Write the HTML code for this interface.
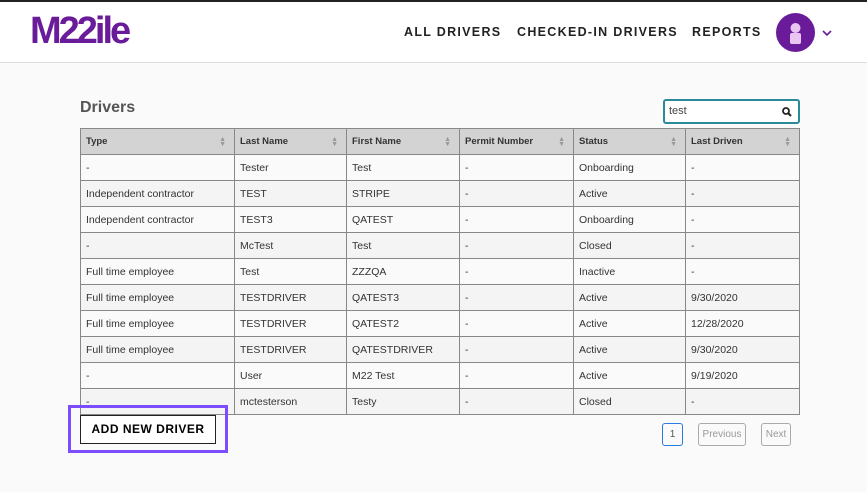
<!DOCTYPE html>
<html><head><style>
*{margin:0;padding:0;box-sizing:border-box}
body{width:867px;height:492px;background:#fafafa;font-family:"Liberation Sans",sans-serif;position:relative;overflow:hidden}
.top{position:absolute;left:0;top:0;width:867px;height:2px;background:#222}
.hdr{position:absolute;left:0;top:2px;width:867px;height:61px;background:#fff;border-bottom:1px solid #ddd}
.logo{position:absolute;left:30px;top:8px;font-size:38px;font-weight:bold;color:#6a1b9a;letter-spacing:-3px}
.nav{position:absolute;top:23px;font-size:12.5px;font-weight:bold;letter-spacing:1.3px;color:#222}
.av{position:absolute;left:776px;top:11px;width:39px;height:39px;border-radius:50%;background:#6a1b9a}
h1{position:absolute;left:80px;top:99px;font-size:16px;color:#555;font-weight:bold}
.search{position:absolute;left:663px;top:99px;width:137px;height:25px;border:2px solid #2a8a9a;border-radius:3px;background:#fff;font-size:11px;padding:4px 4px;color:#444}
table{position:absolute;left:80px;top:128px;border-collapse:collapse;font-size:10.5px;color:#333}
td,th{border:1px solid #888;height:26px;padding:0 5px;text-align:left}
th{background:#d3d3d3;font-weight:bold;font-size:9.5px;position:relative}
th span{position:absolute;right:8px;top:8px;color:#999;font-size:7px;line-height:5px}
tr:nth-child(odd) td{background:#f4f4f4}
.btn{position:absolute;left:80px;top:415px;width:136px;height:29px;border:1px solid #222;background:#fff;font-size:12px;font-weight:bold;text-align:center;line-height:27px;letter-spacing:.5px}
.ring{position:absolute;left:68px;top:405px;width:160px;height:48px;border:3px solid #7b4dff}
.pg{position:absolute;top:423px;height:23px;border:1px solid #aaa;border-radius:3px;font-size:10px;color:#999;text-align:center;line-height:21px}
</style></head><body>
<div class="top"></div>
<div class="hdr">
<div class="logo">M22ile</div>
<div class="nav" style="left:404px">ALL DRIVERS</div>
<div class="nav" style="left:517px">CHECKED-IN DRIVERS</div>
<div class="nav" style="left:692px">REPORTS</div>
<div class="av"><svg width="39" height="39"><circle cx="19.5" cy="15" r="5" fill="#e9c6f2"/><rect x="14" y="20" width="11" height="11" rx="2" fill="#e9c6f2"/></svg></div>
<svg style="position:absolute;left:821px;top:27px" width="12" height="8"><path d="M2 2l4 4 4-4" stroke="#6a1b9a" stroke-width="1.6" fill="none"/></svg>
</div>
<h1>Drivers</h1>
<div class="search">test<svg style="position:absolute;right:6px;top:6px" width="10" height="10"><circle cx="4" cy="4" r="3" stroke="#222" stroke-width="1.8" fill="none"/><path d="M6 6l3 3" stroke="#222" stroke-width="2"/></svg></div>
<table>
<tr><th style="width:154px">Type<span>▲<br>▼</span></th><th style="width:112px">Last Name<span>▲<br>▼</span></th><th style="width:113px">First Name<span>▲<br>▼</span></th><th style="width:114px">Permit Number<span>▲<br>▼</span></th><th style="width:112px">Status<span>▲<br>▼</span></th><th style="width:114px">Last Driven<span>▲<br>▼</span></th></tr>
<tr><td>-</td><td>Tester</td><td>Test</td><td>-</td><td>Onboarding</td><td>-</td></tr>
<tr><td>Independent contractor</td><td>TEST</td><td>STRIPE</td><td>-</td><td>Active</td><td>-</td></tr>
<tr><td>Independent contractor</td><td>TEST3</td><td>QATEST</td><td>-</td><td>Onboarding</td><td>-</td></tr>
<tr><td>-</td><td>McTest</td><td>Test</td><td>-</td><td>Closed</td><td>-</td></tr>
<tr><td>Full time employee</td><td>Test</td><td>ZZZQA</td><td>-</td><td>Inactive</td><td>-</td></tr>
<tr><td>Full time employee</td><td>TESTDRIVER</td><td>QATEST3</td><td>-</td><td>Active</td><td>9/30/2020</td></tr>
<tr><td>Full time employee</td><td>TESTDRIVER</td><td>QATEST2</td><td>-</td><td>Active</td><td>12/28/2020</td></tr>
<tr><td>Full time employee</td><td>TESTDRIVER</td><td>QATESTDRIVER</td><td>-</td><td>Active</td><td>9/30/2020</td></tr>
<tr><td>-</td><td>User</td><td>M22 Test</td><td>-</td><td>Active</td><td>9/19/2020</td></tr>
<tr><td>-</td><td>mctesterson</td><td>Testy</td><td>-</td><td>Closed</td><td>-</td></tr>
</table>
<div class="ring"></div>
<div class="btn">ADD NEW DRIVER</div>
<div class="pg" style="left:662px;width:21px;border-color:#2a7ae2;color:#555">1</div>
<div class="pg" style="left:698px;width:48px">Previous</div>
<div class="pg" style="left:761px;width:30px">Next</div>
</body></html>
